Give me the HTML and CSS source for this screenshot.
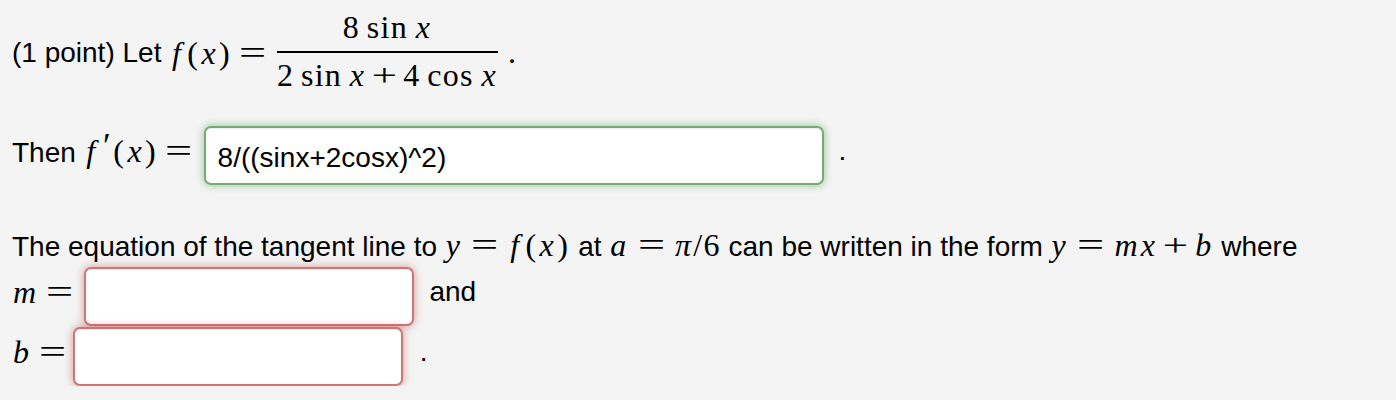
FILE: index.html
```html
<!DOCTYPE html>
<html lang="en">
<head>
<meta charset="utf-8">
<title>Tangent line problem</title>
<link rel="stylesheet" href="styles.css">
</head>
<body>
<div class="problem">
  <div class="row r1">
    <span class="txt">(1 point) Let</span>
    <span class="math lead"><span class="mi f">f</span><span class="mo">(</span><span class="mi">x</span><span class="mo">)</span><span class="rel">=</span></span>
    <span class="frac">
      <span class="num math">8<span class="op">sin</span><span class="mi">x</span></span>
      <span class="bar"></span>
      <span class="den math">2<span class="op">sin</span><span class="mi">x</span><span class="bin">+</span>4<span class="op">cos</span><span class="mi">x</span></span>
    </span>
    <span class="math fdot">.</span>
  </div>

  <div class="row r2">
    <span class="lbl">Then <span class="math"><span class="mi f">f</span><span class="prime">′</span><span class="mo">(</span><span class="mi">x</span><span class="mo">)</span><span class="rel">=</span></span></span>
    <input class="ans good wide" type="text" value="8/((sinx+2cosx)^2)">
    <span class="lbl after">.</span>
  </div>

  <p class="r3">The equation of the tangent line to <span class="math"><span class="mi">y</span><span class="rel">=</span><span class="mi f">f</span><span class="mo">(</span><span class="mi">x</span><span class="mo">)</span></span> at <span class="math"><span class="mi">a</span><span class="rel">=</span><span class="mi">π</span>/6</span> can be written in the form <span class="math"><span class="mi">y</span><span class="rel">=</span><span class="mi">m</span><span class="mi">x</span><span class="bin">+</span><span class="mi">b</span></span> where</p>

  <div class="row r4">
    <span class="lbl math"><span class="mi">m</span><span class="rel">=</span></span>
    <input class="ans bad short" type="text">
    <span class="lbl after">and</span>
  </div>

  <div class="row r5">
    <span class="lbl math"><span class="mi">b</span><span class="rel">=</span></span>
    <input class="ans bad short" type="text">
    <span class="lbl after">.</span>
  </div>
</div>
</body>
</html>
```

FILE: styles.css
```css
html, body {
  margin: 0;
  padding: 0;
}

body {
  background: #f4f4f4;
  color: #000;
  font-family: "Liberation Sans", Arial, sans-serif;
  font-size: 28px;
  line-height: 32px;
}

.problem {
  padding-left: 12px;
}

.row {
  display: flex;
}

/* ---------- math ---------- */
.math {
  font-family: "Liberation Serif", "Times New Roman", serif;
  font-size: 32px;
  letter-spacing: 0.04em;
  white-space: nowrap;
}

.mi {
  font-style: italic;
  padding: 0 0.03em;
}

.mi.f {
  padding-left: 0.08em;
  padding-right: 0.12em;
}

.mo {
  padding: 0 0.04em;
}

.rel {
  display: inline-block;
  width: 0.74em;
  margin: 0 0.3em;
  font-size: 1.06em;
  letter-spacing: 0;
  text-align: center;
  transform: scaleX(1.42);
}

.bin {
  display: inline-block;
  width: 0.72em;
  margin: 0 0.22em;
  letter-spacing: 0;
  text-align: center;
  transform: scaleX(1.4);
}

.op {
  margin: 0 0.17em;
}

.prime {
  display: inline-block;
  font-size: 1.1em;
  margin-left: 0.08em;
  margin-right: 0;
  transform: translateY(-0.1em);
}

/* ---------- row 1 ---------- */
.r1 {
  align-items: center;
  height: 78px;
  margin-top: 14px;
}

.r1 .lead {
  margin-left: 8px;
}

.r1 .rel {
  margin-left: 0.22em;
  margin-right: 0.18em;
}

.frac {
  display: inline-flex;
  flex-direction: column;
  align-items: center;
  margin-left: 5px;
  margin-bottom: 4px;
  padding: 0 1px;
}

.frac .op {
  margin: 0 0.21em;
}

.num,
.den {
  line-height: 30px;
}

.num {
  padding-bottom: 9px;
}

.den {
  padding-top: 7px;
}

.bar {
  align-self: stretch;
  height: 2px;
  background: #000;
}

.fdot {
  margin-left: 9px;
  margin-top: -2px;
}

/* ---------- rows with inputs ---------- */
.r2 {
  align-items: flex-start;
  margin-top: 34px;
}

.r2 .rel {
  margin-left: 0.22em;
  margin-right: 0.2em;
}

.lbl {
  margin-top: 9px;
  white-space: nowrap;
}

.lbl .math {
  line-height: 32px;
}

.ans {
  box-sizing: border-box;
  height: 59px;
  margin: 0 0 0 6px;
  padding: 4px 12px 0;
  background: #fff;
  border: 2px solid;
  border-radius: 7px;
  font-family: "Liberation Sans", Arial, sans-serif;
  font-size: 28px;
  color: #000;
  outline: 0;
}

.ans.good {
  border-color: rgba(81, 153, 81, 0.8);
  box-shadow: inset 0 1px 1px rgba(0, 0, 0, 0.075), 0 0 8px rgba(81, 153, 81, 0.6);
}

.ans.bad {
  border-color: rgba(191, 84, 84, 0.8);
  box-shadow: inset 0 1px 1px rgba(0, 0, 0, 0.075), 0 0 8px rgba(191, 84, 84, 0.6);
}

.ans.wide {
  width: 620px;
}

.ans.short {
  width: 330px;
}

.after {
  margin-left: 15px;
}

/* ---------- row 3 ---------- */
.r3 {
  margin: 44px 0 0;
  white-space: nowrap;
}

.r3 .math {
  line-height: 32px;
}

.r4 {
  align-items: flex-start;
  margin-top: 4px;
}

.r5 {
  align-items: flex-start;
  margin-top: 1px;
}

.r4 .lbl.math,
.r5 .lbl.math {
  letter-spacing: 0;
}

.r4 .rel {
  margin-right: 0.18em;
}

.r5 .rel {
  margin-right: 0.05em;
}

.r5 .after {
  margin-left: 17px;
}
```
